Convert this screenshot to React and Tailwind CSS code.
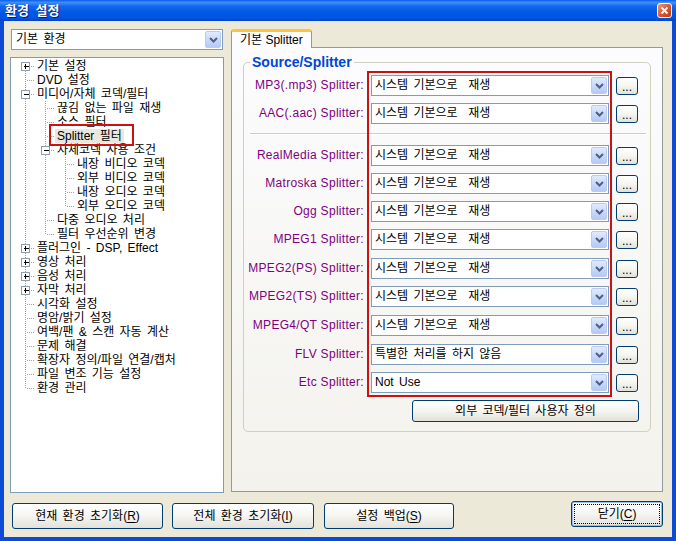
import React from 'react';

const treeItems = [
  { label: '기본 설정', level: 0, box: '+' },
  { label: 'DVD 설정', level: 0 },
  { label: '미디어/자체 코덱/필터', level: 0, box: '-' },
  { label: '끊김 없는 파일 재생', level: 1 },
  { label: '소스 필터', level: 1 },
  { label: 'Splitter 필터', level: 1, selected: true },
  { label: '자체코덱 사용 조건', level: 1, box: '-' },
  { label: '내장 비디오 코덱', level: 2 },
  { label: '외부 비디오 코덱', level: 2 },
  { label: '내장 오디오 코덱', level: 2 },
  { label: '외부 오디오 코덱', level: 2 },
  { label: '다중 오디오 처리', level: 1 },
  { label: '필터 우선순위 변경', level: 1 },
  { label: '플러그인 - DSP, Effect', level: 0, box: '+' },
  { label: '영상 처리', level: 0, box: '+' },
  { label: '음성 처리', level: 0, box: '+' },
  { label: '자막 처리', level: 0, box: '+' },
  { label: '시각화 설정', level: 0 },
  { label: '명암/밝기 설정', level: 0 },
  { label: '여백/팬 & 스캔 자동 계산', level: 0 },
  { label: '문제 해결', level: 0 },
  { label: '확장자 정의/파일 연결/캡처', level: 0 },
  { label: '파일 변조 기능 설정', level: 0 },
  { label: '환경 관리', level: 0 },
];

const DEFAULT_PLAY = '시스템 기본으로  재생';

const splitterRows = [
  { label: 'MP3(.mp3) Splitter:', value: DEFAULT_PLAY, mt: 'mt-[5px]' },
  { label: 'AAC(.aac) Splitter:', value: DEFAULT_PLAY, mt: 'mt-[7px]' },
  { separator: true },
  { label: 'RealMedia Splitter:', value: DEFAULT_PLAY, mt: 'mt-[10px]' },
  { label: 'Matroska Splitter:', value: DEFAULT_PLAY, mt: 'mt-[7px]' },
  { label: 'Ogg Splitter:', value: DEFAULT_PLAY, mt: 'mt-[7px]' },
  { label: 'MPEG1 Splitter:', value: DEFAULT_PLAY, mt: 'mt-[7px]' },
  { label: 'MPEG2(PS) Splitter:', value: DEFAULT_PLAY, mt: 'mt-[8px]' },
  { label: 'MPEG2(TS) Splitter:', value: DEFAULT_PLAY, mt: 'mt-[7px]' },
  { label: 'MPEG4/QT Splitter:', value: DEFAULT_PLAY, mt: 'mt-[8px]' },
  { label: 'FLV Splitter:', value: '특별한 처리를 하지 않음', mt: 'mt-[8px]' },
  { label: 'Etc Splitter:', value: 'Not Use', mt: 'mt-[7px]' },
];

// does the branch at `level` continue below row i?
function continues(i, level) {
  for (let j = i + 1; j < treeItems.length; j++) {
    if (treeItems[j].level < level) return false;
    if (treeItems[j].level === level) return true;
  }
  return false;
}

const TreeRow = ({ item, index }) => {
  const { level, box, label, selected } = item;
  const w = 24 + level * 20;
  const own = 14.5 + level * 20;

  return (
    <div className="flex h-[14px] items-center">
      <svg width={w} height="14" className="shrink-0" shapeRendering="crispEdges">
        {Array.from({ length: level }).map((_, a) =>
          continues(index, a) ? (
            <line key={a} x1={14.5 + a * 20} y1="0" x2={14.5 + a * 20} y2="14" stroke="#A0A0A0" strokeDasharray="1 1" />
          ) : null
        )}
        {index > 0 && <line x1={own} y1="0" x2={own} y2="7" stroke="#A0A0A0" strokeDasharray="1 1" />}
        {continues(index, level) && <line x1={own} y1="8" x2={own} y2="14" stroke="#A0A0A0" strokeDasharray="1 1" />}
        <line x1={own + 1} y1="7.5" x2={w} y2="7.5" stroke="#A0A0A0" strokeDasharray="1 1" />
        {box && (
          <g>
            <rect x={own - 4} y="3.5" width="8" height="8" fill="#FFFFFF" stroke="#8F9FB3" />
            <line x1={own - 2} y1="7.5" x2={own + 3} y2="7.5" stroke="#000000" />
            {box === '+' && <line x1={own} y1="5" x2={own} y2="10" stroke="#000000" />}
          </g>
        )}
      </svg>
      <span
        className={`whitespace-pre px-[2px] text-[12px] leading-[14px] text-black [word-spacing:2px] ${
          selected ? 'bg-[#E9E7DE]' : ''
        }`}
      >
        {label}
      </span>
    </div>
  );
};

const Combo = ({ value, className = '' }) => (
  <div className={`flex h-[21px] items-center border border-[#7F9DB9] bg-white ${className}`}>
    <span className="flex-1 overflow-hidden whitespace-pre pl-[3px] text-[12px] leading-[19px] text-black [word-spacing:2px]">
      {value}
    </span>
    <span className="mr-[1px] flex h-[17px] w-[16px] items-center justify-center rounded-[2px] border border-[#B7CBF5] bg-gradient-to-b from-[#E1EAFE] to-[#B5C9F5]">
      <svg width="9" height="6" viewBox="0 0 9 6">
        <path d="M1 1l3.5 3.5L8 1" fill="none" stroke="#4D6185" strokeWidth="2" />
      </svg>
    </span>
  </div>
);

const XPButton = ({ children, className = '' }) => (
  <button
    type="button"
    className={`flex items-center justify-center rounded-[3px] border border-[#003C74] bg-gradient-to-b from-white via-[#F5F5F1] to-[#E2E1D9] text-[12px] text-black [word-spacing:2px] ${className}`}
  >
    {children}
  </button>
);

const Mn = ({ children }) => <span className="underline underline-offset-2">{children}</span>;

export default function App() {
  return (
    <div className="relative flex h-[541px] w-[676px] flex-col overflow-hidden font-['Liberation_Sans','Noto_Sans_CJK_KR',sans-serif]">
      {/* Title bar */}
      <div className="flex h-[21px] shrink-0 items-center justify-between bg-[linear-gradient(to_bottom,#0A5FEC_0%,#3F8FFA_12%,#1466EE_30%,#0058E6_60%,#0053DF_88%,#0042C4_100%)] pl-[5px] pr-[4px]">
        <span className="text-[13px] font-bold leading-none text-white [text-shadow:1px_1px_0_#0A1E6E] [word-spacing:3px]">
          환경 설정
        </span>
        <span className="flex h-[15px] w-[15px] items-center justify-center rounded-[3px] border border-white bg-gradient-to-br from-[#EE9A7A] via-[#D9572E] to-[#C23A14]">
          <svg width="9" height="9" viewBox="0 0 9 9">
            <path d="M1.5 1.5l6 6M7.5 1.5l-6 6" stroke="#FFFFFF" strokeWidth="1.8" />
          </svg>
        </span>
      </div>

      {/* Window body */}
      <div className="flex flex-1 flex-col border-x-4 border-b-4 border-[#0B4BD6] bg-[#ECE9D8]">
        <div className="flex pt-[8px]">
          {/* Left column */}
          <div className="ml-[6px] w-[214px]">
            <Combo value="기본 환경" className="ml-[1px] w-[212px] [&>span:first-child]:pl-[4px]" />
            <div className="mt-[7px] h-[436px] border border-[#7F9DB9] bg-white pt-[1px]">
              {treeItems.map((item, i) => (
                <TreeRow key={item.label} item={item} index={i} />
              ))}
            </div>
          </div>

          {/* Right column */}
          <div className="ml-[7px] w-[432px]">
            <div className="flex h-[18px]">
              <div className="relative z-10 flex h-[19px] w-[81px] items-center rounded-t-[3px] border-x border-t-[3px] border-x-[#919B9C] border-t-[#FFC23A] bg-[#FCFCFE] pl-[8px] text-[12px] text-black">
                기본 Splitter
              </div>
            </div>
            <div className="h-[445px] border border-[#919B9C] bg-gradient-to-b from-[#FCFCFE] to-[#F3F2EC]">
              <fieldset className="mx-[11px] mt-[6px] rounded-[5px] border border-[#D0D0BF] pb-[9px]">
                <legend className="ml-[6px] px-[2px] text-[14px] font-bold leading-[16px] text-[#0046D5]">
                  Source/Splitter
                </legend>
                {splitterRows.map((row, i) =>
                  row.separator ? (
                    <div key={`sep-${i}`} className="ml-[6px] mr-[4px] mt-[9px] h-[2px] border-t border-b border-t-[#D0D0BF] border-b-white" />
                  ) : (
                    <div key={row.label} className={`flex h-[21px] items-center ${row.mt}`}>
                      <span className="w-[120px] whitespace-nowrap text-right text-[12px] leading-[21px] tracking-[0.3px] text-[#800080]">
                        {row.label}
                      </span>
                      <Combo value={row.value} className="ml-[7px] w-[238px]" />
                      <XPButton className="ml-[7px] h-[18px] w-[22px] pb-[1px] leading-none">
                        <span className="pt-[4px]">...</span>
                      </XPButton>
                    </div>
                  )
                )}
                <XPButton className="ml-[168px] mt-[7px] h-[22px] w-[227px]">외부 코덱/필터 사용자 정의</XPButton>
              </fieldset>
            </div>
          </div>
        </div>

        {/* Bottom buttons */}
        <div className="mt-[10px] flex h-[26px] items-start">
          <XPButton className="ml-[8px] h-[26px] w-[151px]">
            현재 환경 초기화(<Mn>R</Mn>)
          </XPButton>
          <XPButton className="ml-[9px] h-[26px] w-[142px]">
            전체 환경 초기화(<Mn>I</Mn>)
          </XPButton>
          <XPButton className="ml-[10px] h-[26px] w-[130px]">
            설정 백업(<Mn>S</Mn>)
          </XPButton>
          <XPButton className="ml-auto mr-[9px] -mt-[2px] h-[26px] w-[92px] p-[2px] shadow-[inset_0_0_0_1px_#9DBCF2]">
            <span className="flex h-full w-full items-center justify-center border border-dotted border-black">
              닫기(<Mn>C</Mn>)
            </span>
          </XPButton>
        </div>
      </div>

      {/* Annotation boxes */}
      <div className="pointer-events-none absolute left-[367px] top-[71px] h-[326px] w-[245px] border-2 border-[#CC1111]" />
      <div className="pointer-events-none absolute left-[49px] top-[124px] h-[22px] w-[85px] border-2 border-[#CC1111]" />
    </div>
  );
}
